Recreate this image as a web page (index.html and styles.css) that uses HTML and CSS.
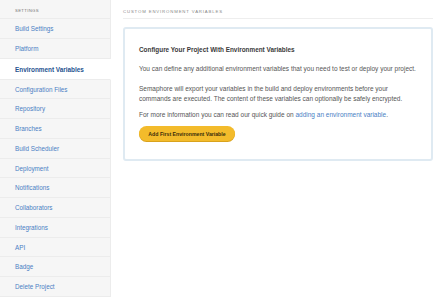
FILE: index.html
```html
<!DOCTYPE html>
<html>
<head>
<meta charset="utf-8">
<link rel="stylesheet" href="styles.css">
</head>
<body>
<div class="page">
  <nav class="sidebar">
    <div class="side-head">SETTINGS</div>
    <a class="item">Build Settings</a>
    <a class="item">Platform</a>
    <a class="item active">Environment Variables</a>
    <a class="item">Configuration Files</a>
    <a class="item">Repository</a>
    <a class="item">Branches</a>
    <a class="item">Build Scheduler</a>
    <a class="item">Deployment</a>
    <a class="item">Notifications</a>
    <a class="item">Collaborators</a>
    <a class="item">Integrations</a>
    <a class="item">API</a>
    <a class="item">Badge</a>
    <a class="item">Delete Project</a>
  </nav>
  <main class="main">
    <div class="section-title">CUSTOM ENVIRONMENT VARIABLES</div>
    <div class="box">
      <h2 class="box-title">Configure Your Project With Environment Variables</h2>
      <p class="p1">You can define any additional environment variables that you need to test or deploy your project.</p>
      <p class="p2">Semaphore will export your variables in the build and deploy environments before your<br>commands are executed. The content of these variables can optionally be safely encrypted.</p>
      <p class="p3">For more information you can read our quick guide on <a class="link">adding an environment variable</a>.</p>
      <button class="btn">Add First Environment Variable</button>
    </div>
  </main>
</div>
</body>
</html>
```
FILE: styles.css
```css
* { box-sizing: border-box; }
html, body { margin: 0; padding: 0; background: #fff; }
body { font-family: "Liberation Sans", Arial, sans-serif; width: 447px; height: 297px; overflow: hidden; }
.page { display: flex; align-items: flex-start; }
.sidebar {
  width: 111px;
  flex: none;
  display: flex;
  flex-direction: column;
}
.side-head {
  height: 19px;
  padding-left: 15px;
  font-size: 4.3px;
  letter-spacing: 0.3px;
  color: #777;
  line-height: 21px;
  background: #f6f6f6;
  border-right: 1px solid #ececec;
  border-bottom: 1px solid #ececec;
}
.item {
  display: block;
  height: 19.77px;
  line-height: 19px;
  padding-left: 15px;
  font-size: 6.3px;
  color: #4a80c4;
  background: #f6f6f6;
  border-right: 1px solid #ececec;
  border-bottom: 1px solid #ececec;
}
.item.active {
  background: #fff;
  border-right-color: #fff;
  color: #24528f;
  font-weight: bold;
  font-size: 6.4px;
  height: 21px;
  line-height: 21px;
}
.main {
  flex: 1;
  padding: 9px 14px 0 11px;
}
.section-title {
  margin-left: 1px;
  font-size: 4.3px;
  letter-spacing: 0.85px;
  color: #888;
  padding-bottom: 4px;
  border-bottom: 1px solid #eeeeee;
}
.box {
  margin-top: 8px;
  margin-left: 1px;
  border: 2px solid #dfeaf2;
  border-radius: 3px;
  padding: 16px 14px 16px 14px;
  height: 134px;
}
.box-title {
  margin: 0;
  font-size: 6.4px;
  font-weight: bold;
  color: #3a3a3a;
  line-height: 9px;
}
.box p {
  margin: 0;
  font-size: 6.5px;
  color: #555;
  line-height: 10px;
}
.p1 { margin-top: 10px !important; }
.p2 { margin-top: 10px !important; }
.p3 { margin-top: 6px !important; }
.link { color: #4a80c4; }
.btn {
  display: block;
  margin-top: 6px;
  width: 96px;
  height: 15px;
  border: none;
  border-radius: 8px;
  background: #f3bb2b;
  box-shadow: 0 1px 0 #d9a21c;
  font-family: "Liberation Sans", Arial, sans-serif;
  font-size: 5.2px;
  font-weight: bold;
  color: #3a2d0a;
  padding: 0;
}
```
